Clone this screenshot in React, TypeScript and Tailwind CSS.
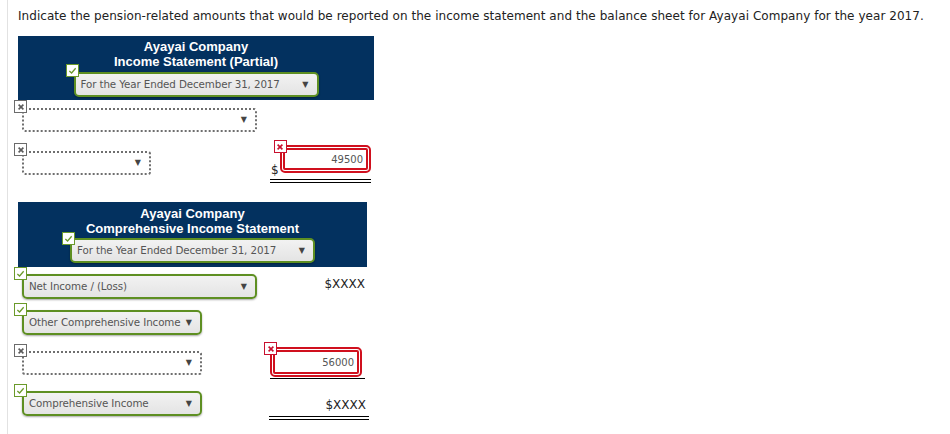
import type { ReactNode } from 'react';

type Mark = 'check' | 'x' | 'xred';

const FONT = { fontFamily: '"DejaVu Sans", Verdana, sans-serif' };
const HEAD_FONT = { fontFamily: '"Liberation Sans", Tahoma, Arial, sans-serif' };

function Badge({ mark, className }: { mark: Mark; className: string }) {
  const tone =
    mark === 'check'
      ? 'border-[#6b9a2a] text-[#6b9a2a]'
      : mark === 'xred'
        ? 'border-[#c8102e] text-[#c8102e]'
        : 'border-[#6b6b6b] text-[#5a5a5a]';
  return (
    <span
      className={`absolute z-10 flex h-[13px] w-[13px] items-center justify-center border bg-white ${tone} ${className}`}
    >
      {mark === 'check' ? (
        <svg viewBox="0 0 10 10" className="h-[9px] w-[9px]">
          <path d="M1.5 5.5 L4 7.8 L8.5 2.5" fill="none" stroke="currentColor" strokeWidth="1.4" />
        </svg>
      ) : (
        <svg viewBox="0 0 10 10" className="h-[8px] w-[8px]">
          <path d="M2 2 L8 8 M8 2 L2 8" fill="none" stroke="currentColor" strokeWidth="2" />
        </svg>
      )}
    </span>
  );
}

interface SelectProps {
  label?: string;
  width: string;
  dotted?: boolean;
  badgeClass: string;
  className?: string;
}

function Select({ label = '', width, dotted = false, badgeClass, className = '' }: SelectProps) {
  return (
    <div className={`relative ${width} ${className}`}>
      <Badge mark={dotted ? 'x' : 'check'} className={badgeClass} />
      {dotted ? (
        <div className="flex h-[24px] items-center justify-end rounded-[3px] border-2 border-dotted border-[#6f6f6f] bg-white pr-[8px]">
          <span className="text-[8px] text-[#444]">▼</span>
        </div>
      ) : (
        <div className="flex h-[25px] items-center justify-between rounded-[5px] border-2 border-[#5e8f22] bg-gradient-to-b from-[#f2f2f2] to-[#e4e4e4] pl-[5px] pr-[8px] shadow-[0_1px_2px_rgba(0,0,0,0.35)]">
          <span className="whitespace-nowrap text-[10.3px] tracking-[-0.1px] text-[#555]">{label}</span>
          <span className="ml-[4px] text-[8px] text-[#444]">▼</span>
        </div>
      )}
    </div>
  );
}

interface HeaderProps {
  lines: string[];
  badgeClass: string;
  gapClass: string;
  className: string;
}

function Header({ lines, badgeClass, gapClass, className }: HeaderProps) {
  return (
    <div className={`flex flex-col items-center bg-[#03315f] ${className}`}>
      {lines.map((line) => (
        <div key={line} className="text-[13px] font-bold leading-[15px] text-white" style={HEAD_FONT}>
          {line}
        </div>
      ))}
      <Select label="For the Year Ended December 31, 2017" width="w-[245px]" badgeClass={badgeClass} className={gapClass} />
    </div>
  );
}

function RedInput({ value, height }: { value: string; height: string }) {
  return (
    <div className="relative w-[92px]">
      <Badge mark="xred" className="-left-[6px] -top-[5px]" />
      <div
        className={`flex ${height} items-center justify-end rounded-[5px] border-[5px] border-double border-[#d0101e] bg-white pr-[3px] text-[10px] text-[#555]`}
      >
        {value}
      </div>
    </div>
  );
}

function Amount({ children, className }: { children: ReactNode; className: string }) {
  return <div className={`text-right text-[12px] leading-[16px] text-[#222] ${className}`}>{children}</div>;
}

export default function App() {
  return (
    <div className="h-[434px] w-[950px] overflow-hidden bg-white pl-[7px]" style={FONT}>
      <div className="h-full border-l border-[#e2e2e2] pl-[10px] pt-[8px]">
        <p className="whitespace-nowrap text-[12px] leading-[16px] tracking-[0.05px] text-[#222]">
          Indicate the pension-related amounts that would be reported on the income statement and the balance sheet for
          Ayayai Company for the year 2017.
        </p>

        <Header
          lines={['Ayayai Company', 'Income Statement (Partial)']}
          badgeClass="-left-[8px] -top-[8px]"
          gapClass="mt-[3px]"
          className="mt-[12px] w-[356px] pb-[3px] pt-[3px]"
        />

        <div className="pl-[4px] pt-[8px]">
          <Select width="w-[235px]" dotted badgeClass="-left-[8px] -top-[8px]" />
        </div>

        <div className="mt-[13px] flex items-start pl-[4px]">
          <Select width="w-[129px]" dotted badgeClass="-left-[8px] -top-[8px]" className="mt-[6px]" />
          <div className="ml-[119px] flex w-[101px] items-end gap-[1px] border-b-4 border-double border-black pb-[6px] pl-[1px]">
            <span className="-mb-[5px] text-[12px] leading-[16px] text-[#222]">$</span>
            <RedInput value="49500" height="h-[28px]" />
          </div>
        </div>

        <Header
          lines={['Ayayai Company', 'Comprehensive Income Statement']}
          badgeClass="-left-[8px] -top-[6px]"
          gapClass="mt-[2px]"
          className="mt-[19px] w-[349px] pb-[4px] pt-[4px]"
        />

        <div className="mt-[7px] flex items-start pl-[4px]">
          <Select label="Net Income / (Loss)" width="w-[235px]" badgeClass="-left-[8px] -top-[7px]" />
          <Amount className="ml-[13px] mt-[2px] w-[95px]">$XXXX</Amount>
        </div>

        <div className="mt-[11px] pl-[4px]">
          <Select label="Other Comprehensive Income" width="w-[180px]" badgeClass="-left-[8px] -top-[7px]" />
        </div>

        <div className="mt-[12px] flex items-start pl-[4px]">
          <Select width="w-[180px]" dotted badgeClass="-left-[8px] -top-[7px]" className="mt-[4px]" />
          <div className="ml-[68px] w-[95px] border-b border-black pb-[1px]">
            <RedInput value="56000" height="h-[30px]" />
          </div>
        </div>

        <div className="mt-[12px] flex items-start pl-[4px]">
          <Select label="Comprehensive Income" width="w-[180px]" badgeClass="-left-[8px] -top-[7px]" />
          <Amount className="ml-[67px] w-[100px] border-b-4 border-double border-black pb-[3px] pr-[3px] pt-[6px]">
            $XXXX
          </Amount>
        </div>
      </div>
    </div>
  );
}
